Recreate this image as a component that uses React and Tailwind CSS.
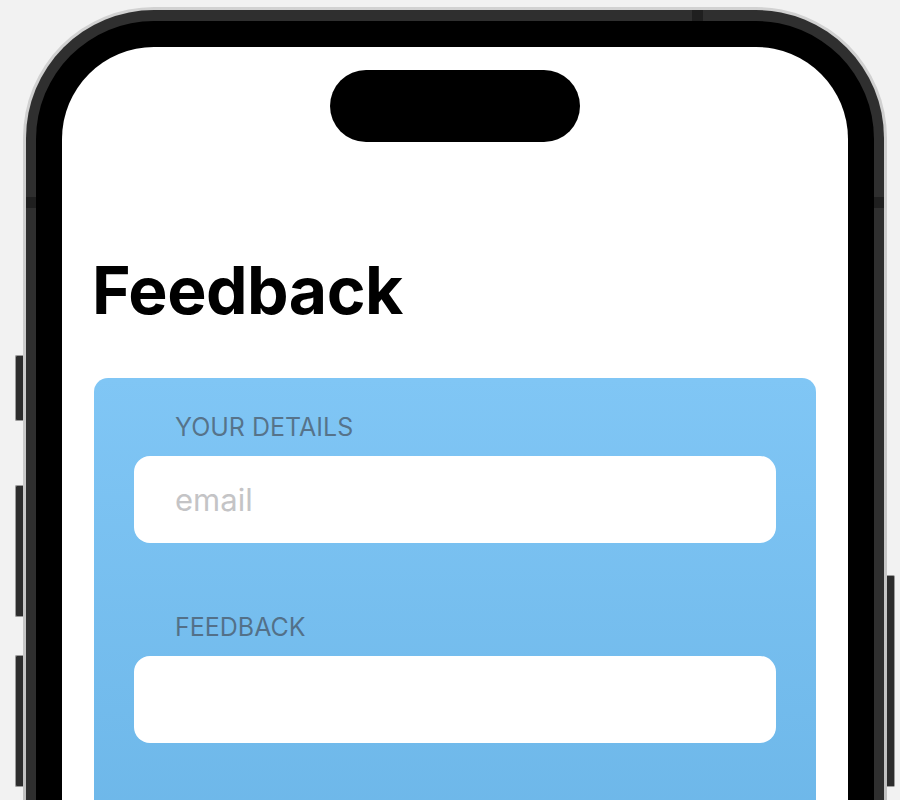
import { useState } from "react";

function SideButton({ className }) {
  return (
    <div
      className={`absolute w-[11px] bg-[#2d2d2d] border border-[#9c9c9c] rounded-[2px] ${className}`}
    />
  );
}

function Field({ label, placeholder, value, onChange }) {
  return (
    <div className="flex flex-col gap-[14px]">
      <div className="pl-[41px] text-[25px] leading-[30px] text-[#3c3c4399]">{label}</div>
      <div className="h-[87px] rounded-[16px] bg-white flex items-center">
        <input
          value={value}
          onChange={(e) => onChange(e.target.value)}
          placeholder={placeholder}
          className="w-full h-full bg-transparent outline-none pl-[41px] pr-6 text-[31px] text-black placeholder:text-[#c4c4c6]"
        />
      </div>
    </div>
  );
}

export default function App() {
  const [email, setEmail] = useState("");
  const [feedback, setFeedback] = useState("");

  return (
    <div
      className="w-[900px] h-[800px] overflow-hidden bg-[#f2f2f2]"
      style={{ fontFamily: "Inter, 'Noto Sans', sans-serif" }}
    >
      <div className="relative ml-[23px] mt-[7px] w-[864px]">
        {/* hardware buttons */}
        <SideButton className="-left-[8px] top-[348px] h-[66px] border-r-0 rounded-r-none" />
        <SideButton className="-left-[8px] top-[478px] h-[132px] border-r-0 rounded-r-none" />
        <SideButton className="-left-[8px] top-[648px] h-[132px] border-r-0 rounded-r-none" />
        <SideButton className="-right-[8px] top-[568px] h-[212px] border-l-0 rounded-l-none" />

        <div className="relative rounded-[131px] bg-gradient-to-b from-[#d2d2d2] to-[#b8b8b8] p-[3px]">
          <div className="relative rounded-[128px] bg-[#2f2f2f] px-[10px] pt-[11px]">
            {/* antenna bands */}
            <div className="absolute left-0 top-[187px] w-[10px] h-[11px] bg-[#1f1f1f]" />
            <div className="absolute right-0 top-[187px] w-[10px] h-[11px] bg-[#1f1f1f]" />
            <div className="absolute left-[666px] top-0 w-[11px] h-[11px] bg-[#1f1f1f]" />

            <div className="rounded-t-[118px] bg-black px-[26px] pt-[26px]">
              <div className="flex flex-col h-[1200px] rounded-t-[92px] bg-white pt-[23px]">
                <div className="self-center w-[250px] h-[72px] rounded-[36px] bg-black" />

                <h1 className="mt-[115px] px-[30px] text-[66px] leading-none font-bold tracking-[-0.5px] text-black">
                  Feedback
                </h1>

                <div className="mt-[55px] mx-[32px] flex flex-col gap-[69px] rounded-[14px] bg-gradient-to-b from-[#80c6f5] to-[#6db7e9] px-[40px] pt-[34px] pb-[86px]">
                  <Field label="YOUR DETAILS" placeholder="email" value={email} onChange={setEmail} />
                  <Field label="FEEDBACK" placeholder="" value={feedback} onChange={setFeedback} />
                </div>
              </div>
            </div>
          </div>
        </div>
      </div>
    </div>
  );
}
